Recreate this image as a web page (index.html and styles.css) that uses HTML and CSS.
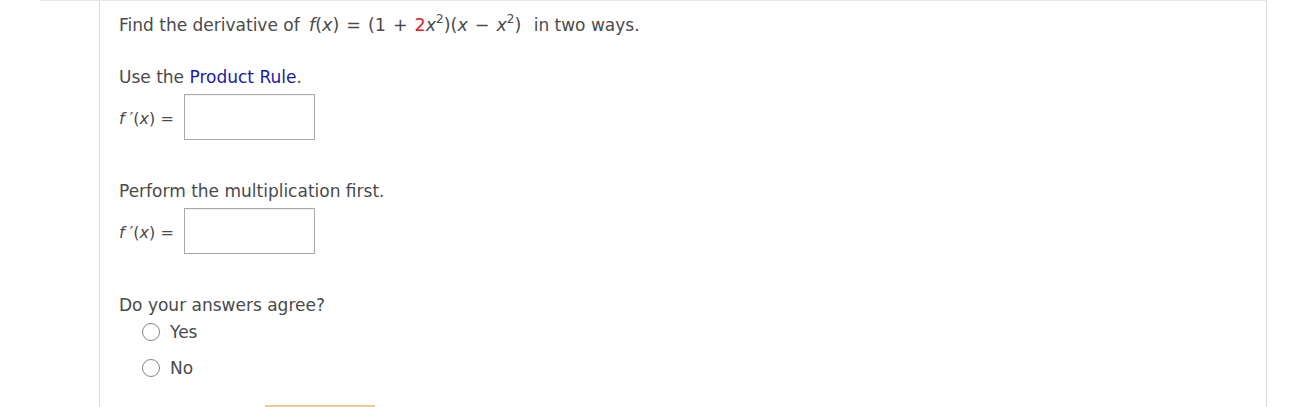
FILE: index.html
```html
<!DOCTYPE html>
<html>
<head>
<meta charset="utf-8">
<link rel="stylesheet" href="styles.css">
</head>
<body>
<div class="frame">
  <div class="panel">
    <p class="q">Find the derivative of <span class="math"><i>f</i>(<i>x</i>)<span class="op">=</span>(1<span class="op">+</span><span class="red">2</span><i>x</i><sup>2</sup>)(<i>x</i><span class="op">&minus;</span><i>x</i><sup>2</sup>)</span> in two ways.</p>
    <p class="step">Use the <span class="link">Product Rule</span>.</p>
    <div class="answer"><span class="lbl"><i>f</i> &prime;(<i>x</i>) =</span><span class="box"></span></div>
    <p class="step step2">Perform the multiplication first.</p>
    <div class="answer"><span class="lbl"><i>f</i> &prime;(<i>x</i>) =</span><span class="box"></span></div>
    <p class="step step3">Do your answers agree?</p>
    <div class="radios">
      <label class="radio"><span class="circle"></span>Yes</label>
      <label class="radio"><span class="circle"></span>No</label>
    </div>
    <div class="btnrow"><span class="btn"></span></div>
  </div>
</div>
</body>
</html>
```
FILE: styles.css
```css
html, body {
  margin: 0;
  padding: 0;
  background: #fff;
  height: 407px;
  overflow: hidden;
}
body {
  font-family: "DejaVu Sans", Verdana, sans-serif;
  color: #4a4a4a;
  font-size: 17px;
}
.frame {
  margin-left: 40px;
  width: 1227px;
  border-top: 1px solid #e6e6e6;
}
.panel {
  margin-left: 59px;
  border-left: 1px solid #dcdcdc;
  border-right: 1px solid #dcdcdc;
  height: 420px;
  padding-left: 19px;
  padding-top: 13px;
}
p { margin: 0; }
.q { line-height: 22px; }
.math { margin: 0 7px 0 4px; font-size: 17.5px; }
.op { margin: 0 7px; }
.red { color: #e0201c; }
sup { font-size: 12px; line-height: 0; vertical-align: 8px; }
.step { margin-top: 30px; line-height: 22px; }
.step2 { margin-top: 40px; }
.step3 { margin-top: 40px; }
.link { color: #1a1aa6; }
.answer {
  display: flex;
  align-items: center;
  margin-top: 6px;
  height: 46px;
}
.lbl { font-size: 16px; width: 65px; padding-top: 2px; }
.box {
  width: 129px;
  height: 44px;
  border: 1px solid #a9a9a9;
  box-shadow: inset 0 1px 1px rgba(0,0,0,0.06);
}
.radios {
  display: flex;
  flex-direction: column;
  gap: 14px;
  margin-top: 5px;
  padding-left: 23px;
}
.radio {
  display: flex;
  align-items: center;
  line-height: 22px;
  height: 22px;
}
.circle {
  width: 16px;
  height: 16px;
  border: 1.5px solid #858585;
  border-radius: 50%;
  margin-right: 10px;
}
.btnrow { margin-top: 26px; padding-left: 146px; }
.btn {
  display: block;
  width: 110px;
  height: 30px;
  border-top: 2px solid #f0c890;
  background: #fffaf0;
}
```
